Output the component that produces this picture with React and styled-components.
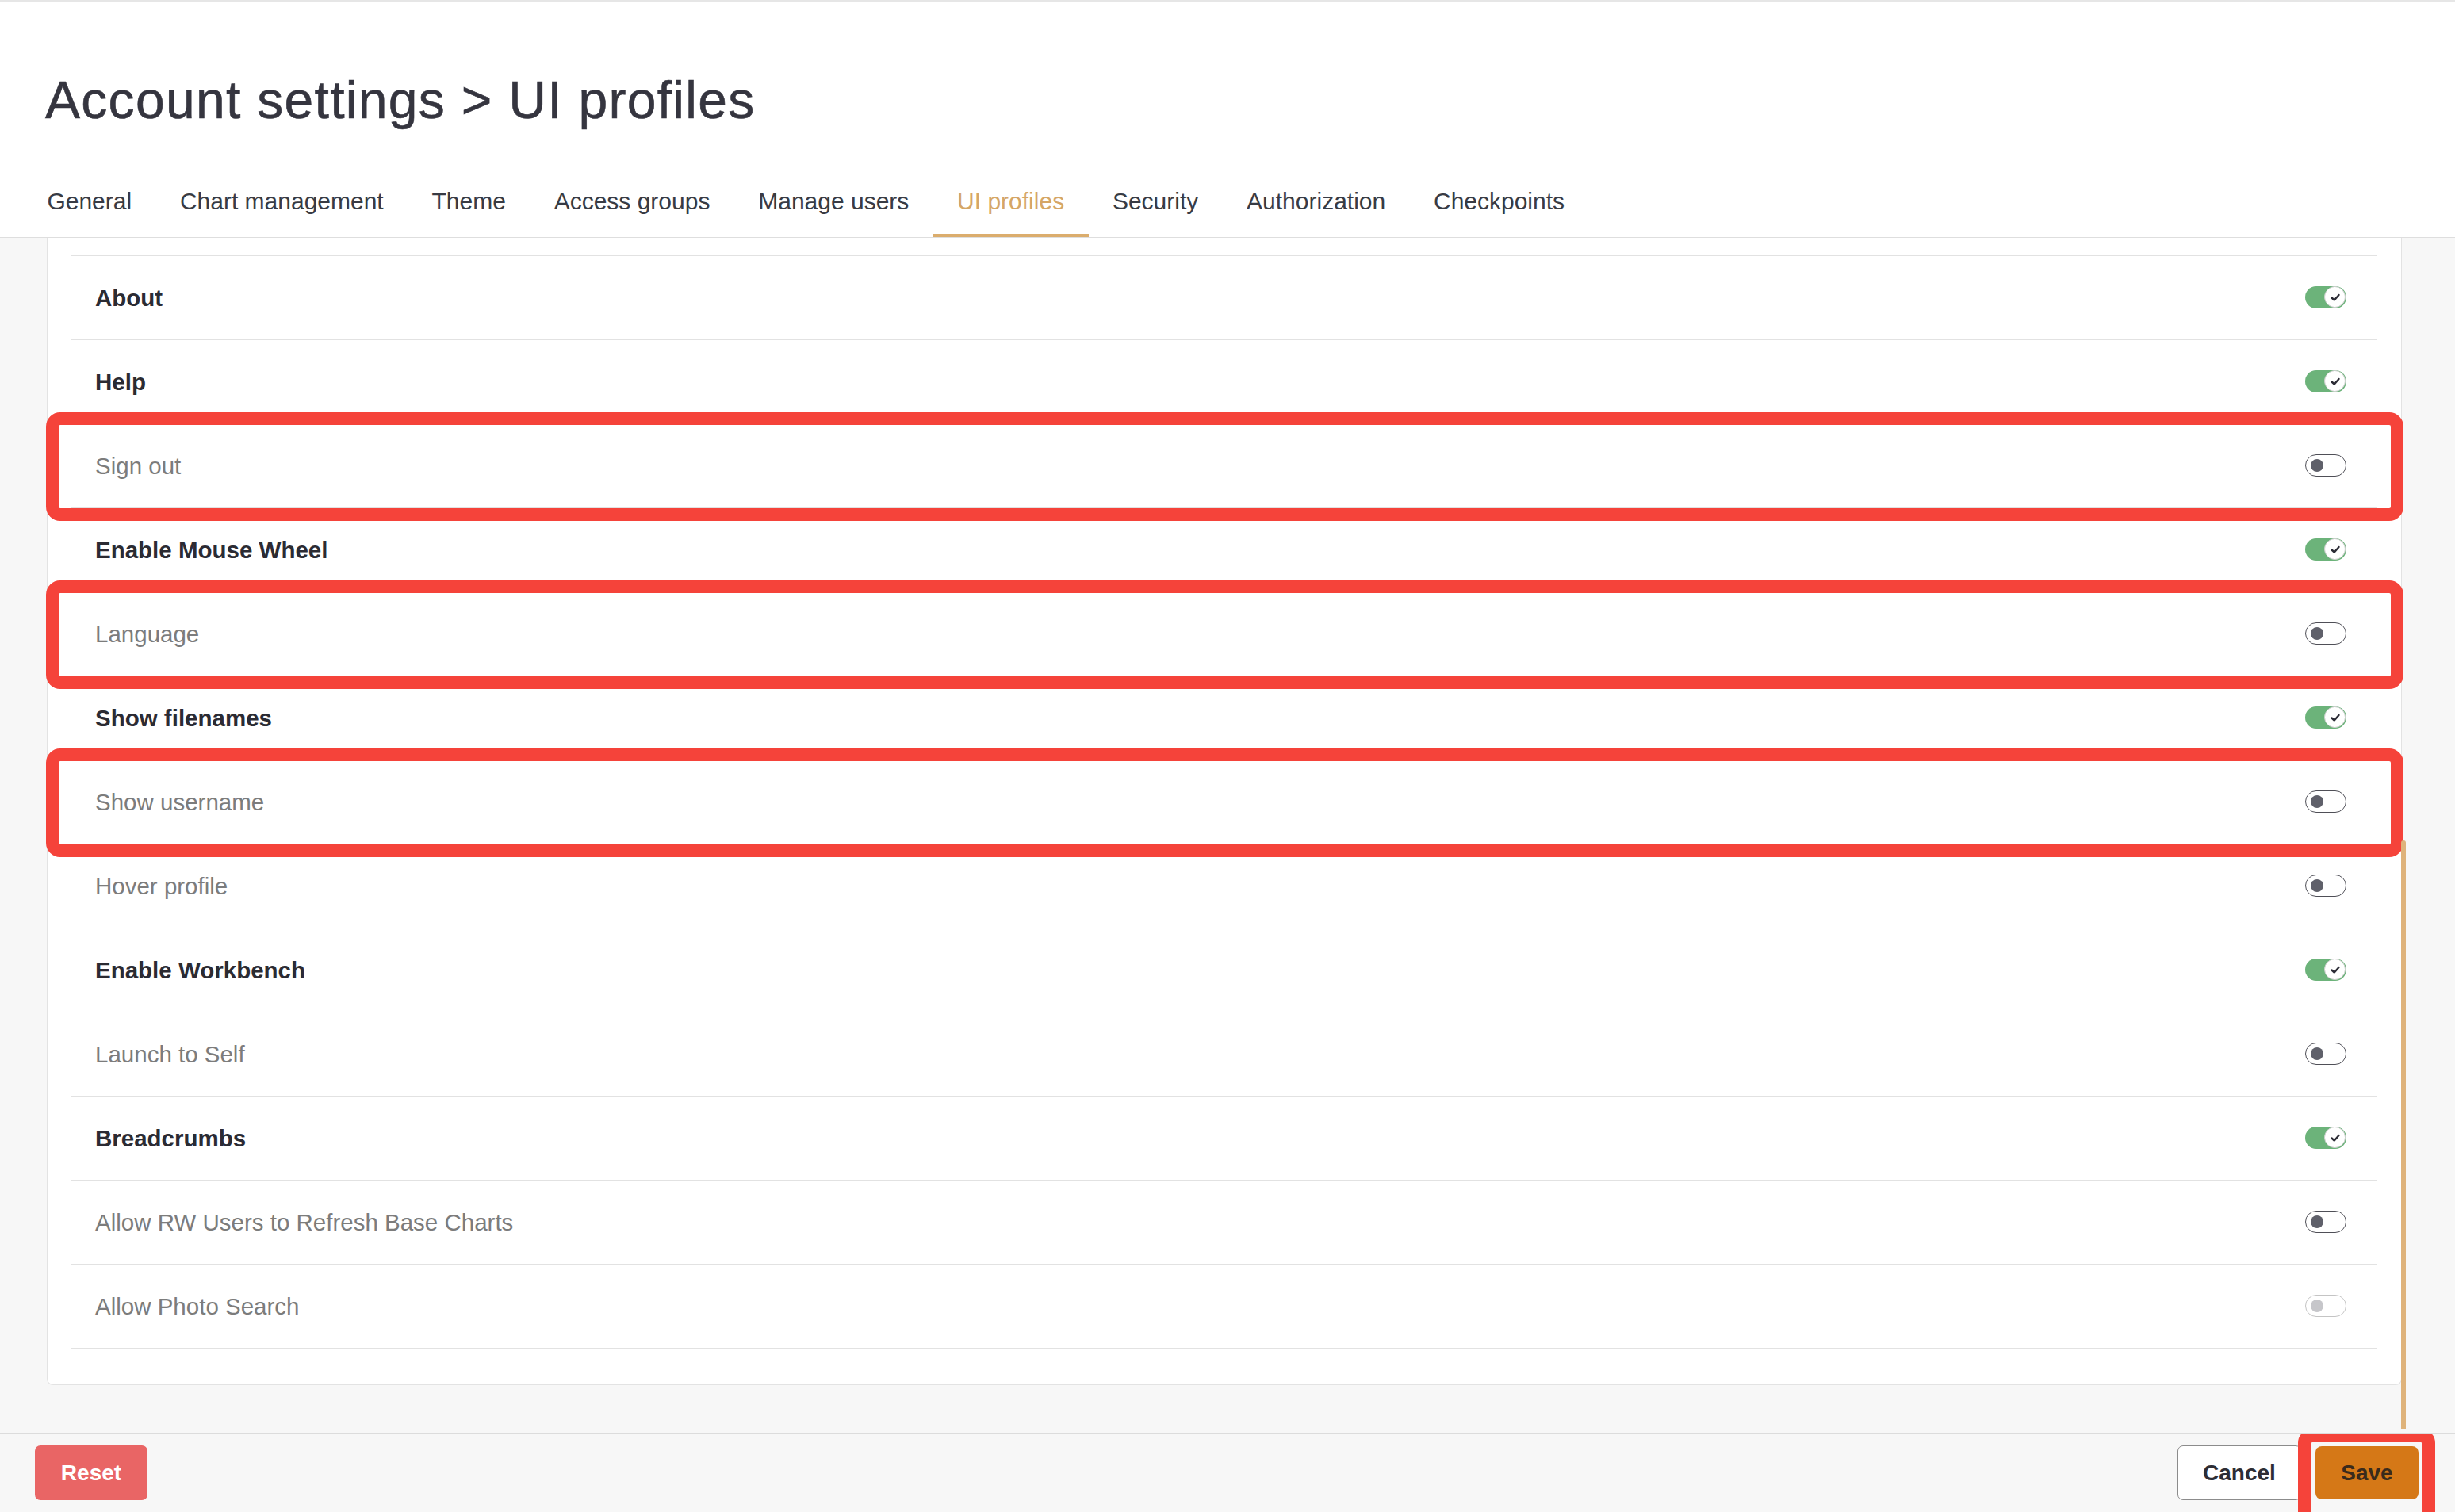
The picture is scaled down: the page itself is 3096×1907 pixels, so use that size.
import React from 'react';
import styled, { createGlobalStyle, css } from 'styled-components';

const GlobalStyle = createGlobalStyle`
  html, body, #root {
    margin: 0;
    height: 100%;
  }

  body {
    font-family: 'Liberation Sans', Arial, sans-serif;
    background: #f7f7f7;
  }
`;

const Page = styled.div`
  position: relative;
  display: flex;
  flex-direction: column;
  height: 100vh;
  overflow: hidden;
  background: #f7f7f7;
`;

const Header = styled.header`
  background: #fff;
  border-top: 2px solid #e6e6e6;
  border-bottom: 1px solid #dedede;
  padding: 91px 0 0 29px;
`;

const Title = styled.h1`
  margin: 0 0 0 28px;
  font-size: 66px;
  line-height: 66px;
  font-weight: 400;
  letter-spacing: 1.3px;
  color: #35353f;
  -webkit-text-stroke: 0.6px #35353f;
`;

const Tabs = styled.nav`
  display: flex;
  margin-top: 80px;
`;

const Tab = styled.span`
  padding: 0 30.4px 26px;
  font-size: 30px;
  line-height: 30px;
  color: #383b44;
  border-bottom: 4px solid transparent;

  ${({ $active }) =>
    $active &&
    css`
      color: #d5a666;
      border-bottom-color: #dbad6d;
    `}
`;

const Content = styled.main`
  flex: 1;
  overflow: hidden;
  padding: 0 67px 0 59px;
`;

const Card = styled.section`
  background: #fff;
  border: 1px solid #e3e3e3;
  border-top: none;
  border-radius: 0 0 8px 8px;
  padding: 22px 30px 45px 29px;
`;

const List = styled.div`
  border-top: 1px solid #e2e2e2;
`;

const Row = styled.div`
  position: relative;
  display: flex;
  align-items: center;
  justify-content: space-between;
  height: 105px;
  padding: 0 39px 0 31px;
  border-bottom: 1px solid #e2e2e2;

  ${({ $highlight }) =>
    $highlight &&
    css`
      &::after {
        content: '';
        position: absolute;
        top: -15px;
        bottom: -17px;
        left: -31px;
        right: -33px;
        border: 16px solid #f5433a;
        border-radius: 18px;
        pointer-events: none;
        z-index: 2;
      }
    `}
`;

const Label = styled.span`
  font-size: 29.5px;
  font-weight: ${({ $bold }) => ($bold ? 700 : 400)};
  color: ${({ $bold }) => ($bold ? '#2b2b33' : '#7c7c7c')};
`;

const Track = styled.span`
  box-sizing: border-box;
  display: flex;
  align-items: center;
  width: 52px;
  height: 28px;
  margin-top: -2px;
  border-radius: 14px;

  ${({ $on, $disabled }) =>
    $on
      ? css`
          justify-content: flex-end;
          padding: 0 1px;
          background: #6cb37a;
        `
      : css`
          padding: 0 6px;
          background: #fff;
          border: 1.5px solid ${$disabled ? '#c4c4c4' : '#4f4f57'};
        `}
`;

const Knob = styled.span`
  display: flex;
  align-items: center;
  justify-content: center;
  border-radius: 50%;

  ${({ $on, $disabled }) =>
    $on
      ? css`
          width: 25px;
          height: 25px;
          background: #fff;
          border: 1px solid #d0d0d0;
        `
      : css`
          width: 16px;
          height: 16px;
          background: ${$disabled ? '#c6c6ca' : '#5f606a'};
        `}
`;

const Footer = styled.footer`
  display: flex;
  align-items: flex-start;
  justify-content: space-between;
  height: 100px;
  box-sizing: border-box;
  padding: 15px 46px 0 44px;
  border-top: 1px solid #dcdcdc;
  background: #f7f7f7;
  overflow: hidden;
`;

const Actions = styled.div`
  display: flex;
  gap: 18px;
`;

const Button = styled.button`
  box-sizing: border-box;
  height: 69px;
  border-radius: 7px;
  font-family: inherit;
  font-size: 28px;
  font-weight: 700;
  cursor: pointer;
`;

const ResetButton = styled(Button)`
  width: 142px;
  border: none;
  background: #e96565;
  color: #fff;
`;

const CancelButton = styled(Button)`
  width: 156px;
  border: 1.5px solid #8c8c8c;
  background: #fff;
  color: #2d2d35;
`;

const SaveWrap = styled.span`
  position: relative;
  display: flex;

  &::after {
    content: '';
    position: absolute;
    top: -21px;
    bottom: -40px;
    left: -22px;
    right: -21px;
    border: 17px solid #f5433a;
    border-radius: 18px;
    pointer-events: none;
  }
`;

const SaveButton = styled(Button)`
  width: 130px;
  height: 67px;
  margin-top: 1px;
  border: none;
  border-radius: 8px;
  background: #d57817;
  color: #3a2b1c;
`;

const Connector = styled.span`
  position: absolute;
  left: 3028px;
  top: 1060px;
  width: 6px;
  height: 742px;
  border-radius: 3px 3px 0 0;
  background: #dfb37b;
  z-index: 3;
`;

const tabs = [
  'General',
  'Chart management',
  'Theme',
  'Access groups',
  'Manage users',
  'UI profiles',
  'Security',
  'Authorization',
  'Checkpoints',
];

const settings = [
  { label: 'About', on: true },
  { label: 'Help', on: true },
  { label: 'Sign out', highlight: true },
  { label: 'Enable Mouse Wheel', on: true },
  { label: 'Language', highlight: true },
  { label: 'Show filenames', on: true },
  { label: 'Show username', highlight: true },
  { label: 'Hover profile' },
  { label: 'Enable Workbench', on: true },
  { label: 'Launch to Self' },
  { label: 'Breadcrumbs', on: true },
  { label: 'Allow RW Users to Refresh Base Charts' },
  { label: 'Allow Photo Search', disabled: true },
];

const Toggle = ({ on, disabled }) => (
  <Track $on={on} $disabled={disabled}>
    <Knob $on={on} $disabled={disabled}>
      {on && (
        <svg width='16' height='16' viewBox='0 0 16 16'>
          <polyline
            points='3.5,8.5 6.8,11.5 12.5,5'
            fill='none'
            stroke='#2c2c36'
            strokeWidth='2.4'
            strokeLinecap='round'
            strokeLinejoin='round'
          />
        </svg>
      )}
    </Knob>
  </Track>
);

const App = () => (
  <Page>
    <GlobalStyle />
    <Header>
      <Title>Account settings &gt; UI profiles</Title>
      <Tabs>
        {tabs.map((tab) => (
          <Tab key={tab} $active={tab === 'UI profiles'}>
            {tab}
          </Tab>
        ))}
      </Tabs>
    </Header>

    <Content>
      <Card>
        <List>
          {settings.map((item) => (
            <Row key={item.label} $highlight={item.highlight}>
              <Label $bold={item.on}>{item.label}</Label>
              <Toggle on={item.on} disabled={item.disabled} />
            </Row>
          ))}
        </List>
      </Card>
    </Content>

    <Footer>
      <ResetButton>Reset</ResetButton>
      <Actions>
        <CancelButton>Cancel</CancelButton>
        <SaveWrap>
          <SaveButton>Save</SaveButton>
        </SaveWrap>
      </Actions>
    </Footer>

    <Connector />
  </Page>
);

export default App;
